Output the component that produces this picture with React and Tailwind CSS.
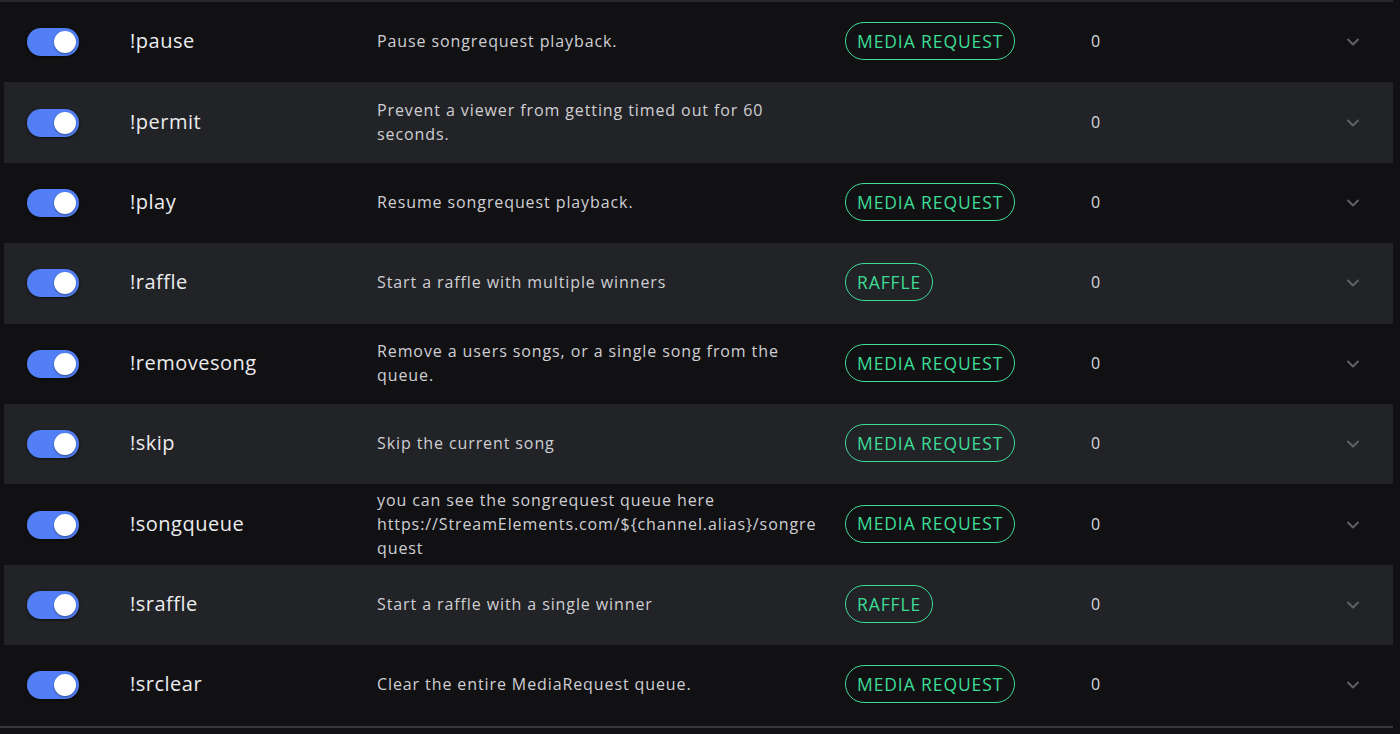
import { ChevronDown } from 'lucide-react';

const commands = [
  { name: '!pause', desc: 'Pause songrequest playback.', tag: 'MEDIA REQUEST' },
  { name: '!permit', desc: 'Prevent a viewer from getting timed out for 60 seconds.', tag: null },
  { name: '!play', desc: 'Resume songrequest playback.', tag: 'MEDIA REQUEST' },
  { name: '!raffle', desc: 'Start a raffle with multiple winners', tag: 'RAFFLE' },
  { name: '!removesong', desc: 'Remove a users songs, or a single song from the queue.', tag: 'MEDIA REQUEST' },
  { name: '!skip', desc: 'Skip the current song', tag: 'MEDIA REQUEST' },
  {
    name: '!songqueue',
    desc: 'you can see the songrequest queue here https://StreamElements.com/${channel.alias}/songrequest',
    tag: 'MEDIA REQUEST',
  },
  { name: '!sraffle', desc: 'Start a raffle with a single winner', tag: 'RAFFLE' },
  { name: '!srclear', desc: 'Clear the entire MediaRequest queue.', tag: 'MEDIA REQUEST' },
];

function Toggle() {
  return (
    <div className="w-[52px] h-[28px] rounded-full bg-[#527ff5] flex items-center justify-end pr-[3px] shadow-[0_1px_3px_rgba(0,0,0,0.6)]">
      <div className="w-[22px] h-[22px] rounded-full bg-white shadow-[0_1px_2px_rgba(0,0,0,0.4)]" />
    </div>
  );
}

export default function App() {
  return (
    <div
      className="min-h-screen w-full bg-[#111113] text-[#e6e6e8]"
      style={{ fontFamily: '"Open Sans", "Noto Sans", sans-serif' }}
    >
      <div className="mr-[7px] border-t-2 border-b-2 border-t-[#26272b] border-b-[#36373b]">
        {commands.map((c, i) => (
          <div
            key={c.name}
            className={`ml-[4px] h-[80.4px] grid grid-cols-[103px_247px_468px_246px_1fr_auto] items-center pl-[23px] pr-[30px] ${
              i % 2 === 1 ? 'bg-[#222327]' : 'bg-[#111113]'
            }`}
          >
            <Toggle />
            <div className="text-[20px] tracking-[0.5px] text-[#ececee] -mt-[2px]">{c.name}</div>
            <div className="text-[16px] leading-[24px] tracking-[0.9px] text-[#cfcfd3] pr-[26px] break-words -mt-[2px]">
              {c.desc}
            </div>
            <div className="-mt-[2px]">
              {c.tag && (
                <span className="inline-flex items-center h-[38px] px-[11px] rounded-full border-[1.6px] border-[#3ddc97] text-[#3ddc97] text-[17.5px] tracking-[0.9px]">
                  {c.tag}
                </span>
              )}
            </div>
            <div className="text-[16px] text-[#d8d8dc] -mt-[2px]">0</div>
            <ChevronDown size={20} strokeWidth={2.4} className="text-[#606166]" />
          </div>
        ))}
      </div>
    </div>
  );
}
